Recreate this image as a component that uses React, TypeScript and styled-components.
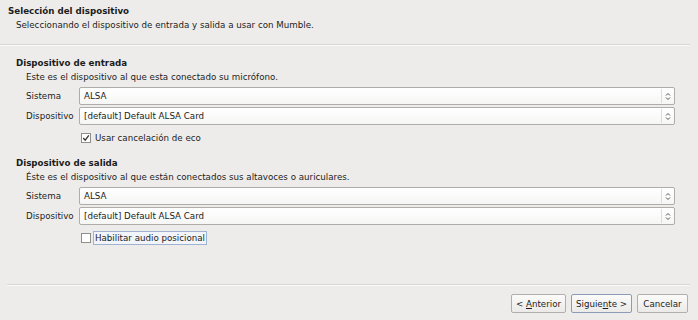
import * as React from 'react'
import styled, { createGlobalStyle } from 'styled-components'

const Global = createGlobalStyle`
  html, body {
    margin: 0;
    padding: 0;
    background: #edecea;
  }
  body {
    font-family: 'DejaVu Sans', 'Liberation Sans', sans-serif;
    font-size: 8.7px;
    color: #1c1c1c;
  }
`

const Page = styled.div`
  width: 698px;
  height: 320px;
  display: flex;
  flex-direction: column;
  overflow: hidden;
`

const Header = styled.div`
  height: 44px;
  box-sizing: border-box;
  padding: 4px 8px 0;
`

const Title = styled.div`
  font-weight: bold;
  line-height: 14px;
`

const Subtitle = styled.div`
  line-height: 14px;
  padding-left: 8px;
`

const Separator = styled.div<{ $inset?: number }>`
  height: 1px;
  background: #d9d8d5;
  border-bottom: 1px solid #f9f9f8;
  margin: 0 8px 0 ${(p) => p.$inset ?? 0}px;
`

const Body = styled.div`
  flex: 1;
  padding: 10px 23px 0 16px;
`

const Group = styled.div`
  & + & {
    margin-top: 11px;
  }
`

const GroupTitle = styled.div`
  font-weight: bold;
  line-height: 14px;
`

const GroupDesc = styled.div`
  line-height: 14px;
  padding-left: 10px;
`

const Form = styled.div`
  display: grid;
  grid-template-columns: 53px 1fr;
  row-gap: 2px;
  margin-top: 3px;
  padding-left: 10px;
  align-items: center;
`

const Label = styled.div`
  line-height: 14px;
  white-space: nowrap;
`

const Combo = styled.div`
  height: 18px;
  box-sizing: border-box;
  border: 1px solid #aeadaa;
  border-radius: 2px;
  background: linear-gradient(#ffffff, #f6f6f5);
  display: flex;
  align-items: center;
  box-shadow: inset 0 1px 0 #fff;
`

const ComboText = styled.div`
  flex: 1;
  padding-left: 4px;
  line-height: 14px;
`

const ComboArrow = styled.div`
  width: 12px;
  height: 14px;
  border-left: 1px solid #dddcda;
  display: flex;
  align-items: center;
  justify-content: center;
`

const CheckRow = styled.label`
  display: flex;
  align-items: center;
  gap: 2px;
  margin-top: 6px;
  padding-left: 65px;
  line-height: 14px;
`

const Box = styled.span`
  width: 8px;
  height: 8px;
  border: 1px solid #8f8e8b;
  background: #ffffff;
  display: inline-flex;
  align-items: center;
  justify-content: center;
`

const CheckText = styled.span<{ $focus?: boolean }>`
  padding: 0 1px;
  border: 1px solid ${(p) => (p.$focus ? '#9fb2cf' : 'transparent')};
  background: ${(p) => (p.$focus ? '#f1f4f8' : 'transparent')};
  line-height: 12px;
`

const Footer = styled.div`
  display: flex;
  justify-content: flex-end;
  gap: 5px;
  padding: 8px 10px 7px;
`

const Button = styled.div<{ $default?: boolean; $w: number }>`
  width: ${(p) => p.$w}px;
  height: 19px;
  box-sizing: border-box;
  border: 1px solid ${(p) => (p.$default ? '#8d9cb6' : '#b0afac')};
  border-radius: 2px;
  background: linear-gradient(#fbfbfa, #ebeae8);
  display: flex;
  align-items: center;
  justify-content: center;
  line-height: 14px;
  white-space: nowrap;
`

function Arrows() {
  return (
    <svg width="6" height="9" viewBox="0 0 6 9">
      <path d="M1 3.5 L3 1.5 L5 3.5 M1 5.5 L3 7.5 L5 5.5" fill="none" stroke="#555" strokeWidth="1" />
    </svg>
  )
}

function Check() {
  return (
    <svg width="8" height="8" viewBox="0 0 8 8">
      <path d="M1.2 4 L3.2 6.2 L6.8 1.4" fill="none" stroke="#333" strokeWidth="1.3" />
    </svg>
  )
}

function Select({ value }: { value: string }) {
  return (
    <Combo>
      <ComboText>{value}</ComboText>
      <ComboArrow>
        <Arrows />
      </ComboArrow>
    </Combo>
  )
}

export default function App() {
  return (
    <Page>
      <Global />
      <Header>
        <Title>Selección del dispositivo</Title>
        <Subtitle>Seleccionando el dispositivo de entrada y salida a usar con Mumble.</Subtitle>
      </Header>
      <Separator />
      <Body>
        <Group>
          <GroupTitle>Dispositivo de entrada</GroupTitle>
          <GroupDesc>Este es el dispositivo al que esta conectado su micrófono.</GroupDesc>
          <Form>
            <Label>Sistema</Label>
            <Select value="ALSA" />
            <Label>Dispositivo</Label>
            <Select value="[default] Default ALSA Card" />
          </Form>
          <CheckRow>
            <Box>
              <Check />
            </Box>
            <CheckText>Usar cancelación de eco</CheckText>
          </CheckRow>
        </Group>
        <Group>
          <GroupTitle>Dispositivo de salida</GroupTitle>
          <GroupDesc>Éste es el dispositivo al que están conectados sus altavoces o auriculares.</GroupDesc>
          <Form>
            <Label>Sistema</Label>
            <Select value="ALSA" />
            <Label>Dispositivo</Label>
            <Select value="[default] Default ALSA Card" />
          </Form>
          <CheckRow>
            <Box />
            <CheckText $focus>Habilitar audio posicional</CheckText>
          </CheckRow>
        </Group>
      </Body>
      <Separator $inset={7} />
      <Footer>
        <Button $w={55}>
          &lt;&nbsp;<u>A</u>nterior
        </Button>
        <Button $w={61} $default>
          Siguie<u>n</u>te &gt;
        </Button>
        <Button $w={51}>Cancelar</Button>
      </Footer>
    </Page>
  )
}
